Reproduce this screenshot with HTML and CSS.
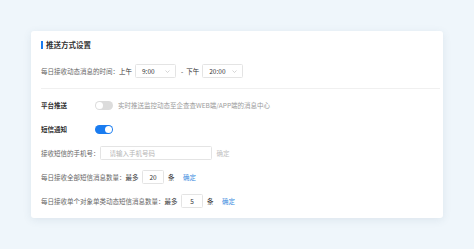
FILE: index.html
```html
<!DOCTYPE html>
<html>
<head>
  <meta charset="UTF-8">
  <title>推送方式设置</title>
  <link rel="stylesheet" href="styles.css">
</head>
<body>

  <div class="card">
    <h2 class="title">推送方式设置</h2>

    <div class="row">
      <span class="label">每日接收动态消息的时间：</span>
      <span class="dark">上午</span>
      <div class="select">
        <span>9:00</span>
        <svg width="5" height="3" viewBox="0 0 5 3"><path d="M0.5 0.5 L2.5 2.5 L4.5 0.5" fill="none" stroke="#c4c4c4" stroke-width="0.7"/></svg>
      </div>
      <span class="dash">-</span>
      <span class="dark">下午</span>
      <div class="select">
        <span>20:00</span>
        <svg width="5" height="3" viewBox="0 0 5 3"><path d="M0.5 0.5 L2.5 2.5 L4.5 0.5" fill="none" stroke="#c4c4c4" stroke-width="0.7"/></svg>
      </div>
    </div>

    <div class="divider"></div>

    <div class="row">
      <span class="name">平台推送</span>
      <span class="switch"></span>
      <span class="desc">实时推送监控动态至企查查WEB端/APP端的消息中心</span>
    </div>

    <div class="row">
      <span class="name">短信通知</span>
      <span class="switch on"></span>
    </div>

    <div class="row">
      <span class="label">接收短信的手机号：</span>
      <input class="phone" type="text" placeholder="请输入手机号码">
      <a class="ok disabled">确定</a>
    </div>

    <div class="row">
      <span class="label">每日接收全部短信消息数量：</span>
      <span class="dark">最多</span>
      <input class="num" type="text" value="20">
      <span class="dark unit">条</span>
      <a class="ok">确定</a>
    </div>

    <div class="row">
      <span class="label">每日接收单个对象单类动态短信消息数量：</span>
      <span class="dark">最多</span>
      <input class="num" type="text" value="5">
      <span class="dark unit">条</span>
      <a class="ok">确定</a>
    </div>
  </div>

</body>
</html>
```

FILE: styles.css
```css
body {
  margin: 0;
  background-color: #eff6fb;
  font-family: "Noto Sans CJK SC", "Noto Sans", sans-serif;
  font-size: 6.5px;
  color: #666;
  padding: 31px 31px 31px 31px;
  height: 249px;
  box-sizing: border-box;
}

.card {
  width: 412px;
  background: #fff;
  border-radius: 3px;
  box-shadow: 0 2px 8px rgba(60, 90, 120, 0.10);
  padding: 9px 3px 10px 10px;
  box-sizing: border-box;
}

.title {
  margin: 0;
  font-size: 7.5px;
  line-height: 10px;
  font-weight: bold;
  color: #333;
  display: flex;
  align-items: center;
}

.title::before {
  content: "";
  width: 2px;
  height: 8px;
  background: #1a7cf0;
  margin-right: 3px;
}

.row {
  display: flex;
  align-items: center;
  height: 14px;
  line-height: 14px;
  margin-top: 10px;
}

.title + .row {
  margin-top: 14px;
}

.divider + .row {
  margin-top: 9px;
}

.divider {
  height: 1px;
  background: #f0f0f0;
  margin-top: 10px;
}

.dark {
  color: #333;
}

.dash {
  color: #333;
  margin: 0 3px 0 5px;
}

.select {
  width: 41px;
  height: 14px;
  box-sizing: border-box;
  border: 1px solid #e4e4e4;
  border-radius: 1.5px;
  display: flex;
  align-items: center;
  justify-content: space-between;
  padding: 0 5px 0 6px;
  margin-left: 3px;
  color: #333;
}

.name {
  width: 54px;
  font-weight: bold;
  color: #333;
}

.switch {
  width: 18px;
  height: 9px;
  border-radius: 5px;
  background: #dcdcdc;
  position: relative;
}

.switch::after {
  content: "";
  position: absolute;
  top: 1px;
  left: 1px;
  width: 7px;
  height: 7px;
  border-radius: 50%;
  background: #fff;
}

.switch.on {
  background: #1a7cf0;
}

.switch.on::after {
  left: 10px;
}

.desc {
  color: #9a9a9a;
  margin-left: 5px;
}

input {
  font-family: inherit;
  font-size: 6.5px;
  height: 14px;
  box-sizing: border-box;
  border: 1px solid #e4e4e4;
  border-radius: 1.5px;
  outline: none;
  color: #333;
  padding: 0;
}

input::placeholder {
  color: #b5b5b5;
}

.phone {
  width: 112px;
  padding-left: 9px;
}

.num {
  width: 22px;
  text-align: center;
  margin-left: 3.5px;
}

.unit {
  margin-left: 4px;
}

.ok {
  color: #3b8be0;
  margin-left: 8.5px;
}

.ok.disabled {
  color: #c0c0c0;
  margin-left: 5px;
}
```
